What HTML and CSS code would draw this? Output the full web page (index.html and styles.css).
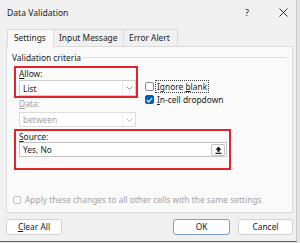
FILE: index.html
```html
<!DOCTYPE html>
<html>
<head>
<meta charset="utf-8">
<link rel="stylesheet" href="styles.css">
</head>
<body>
<div class="dialog">
  <div class="titlebar">
    <span class="title">Data Validation</span>
    <span class="help">?</span>
    <span class="close"><svg width="9" height="9" viewBox="0 0 9 9"><path d="M0.5 0.5 L8.5 8.5 M8.5 0.5 L0.5 8.5" stroke="#1b1b1b" stroke-width="0.9" fill="none"/></svg></span>
  </div>
  <div class="tabs">
    <div class="tab t1 active">Settings</div>
    <div class="tab t2">Input Message</div>
    <div class="tab t3">Error Alert</div>
  </div>
  <div class="panel">
    <div class="group-title"><span>Validation criteria</span><span class="rule"></span></div>
    <div class="criteria">
      <div class="row">
        <div class="leftcol">
          <div class="hl hl-allow">
            <div class="label"><u>A</u>llow:</div>
            <div class="combo"><span class="val">List</span><span class="arrow"><svg width="7" height="4" viewBox="0 0 7 4"><path d="M0.5 0.5 L3.5 3.5 L6.5 0.5" stroke="#8a8a8a" stroke-width="0.9" fill="none"/></svg></span></div>
          </div>
          <div class="label disabled"><u>D</u>ata:</div>
          <div class="combo combo-disabled"><span class="val">between</span><span class="arrow"><svg width="7" height="4" viewBox="0 0 7 4"><path d="M0.5 0.5 L3.5 3.5 L6.5 0.5" stroke="#b0b0b0" stroke-width="0.9" fill="none"/></svg></span></div>
        </div>
        <div class="checks">
          <div class="check"><span class="box"></span><span class="focus-text">Ignore <u>b</u>lank</span></div>
          <div class="check"><span class="box checked"><svg width="7" height="6" viewBox="0 0 7 6"><path d="M0.8 3 L2.7 4.9 L6.2 1" stroke="#fff" stroke-width="1.1" fill="none"/></svg></span><span class="ctext"><u>I</u>n-cell dropdown</span></div>
        </div>
      </div>
      <div class="hl hl-source">
        <div class="label label-src"><u>S</u>ource:</div>
        <div class="input"><span class="val">Yes, No</span><span class="pick"><svg width="7" height="8" viewBox="0 0 7 8"><path d="M3.5 0.5 L0.5 3.8 L2.4 3.8 L2.4 5.8 L4.6 5.8 L4.6 3.8 L6.5 3.8 Z" fill="#111"/><rect x="0.5" y="6.7" width="6" height="1.2" fill="#111"/></svg></span></div>
      </div>
    </div>
    <div class="apply"><span class="box box-disabled"></span><span class="apply-text">Apply these changes to all other cells with the same settings</span></div>
  </div>
  <div class="footer">
    <div class="btn btn-clear"><u>C</u>lear All</div>
    <div class="spacer"></div>
    <div class="btn btn-ok">OK</div>
    <div class="btn btn-cancel">Cancel</div>
  </div>
</div>
</body>
</html>
```

FILE: styles.css
```css
html, body {
  margin: 0;
  padding: 0;
}
body {
  background: #e4e4e4;
  font-family: "Noto Sans", sans-serif;
  font-size: 8.4px;
  color: #1b1b1b;
  width: 300px;
  height: 243px;
  overflow: hidden;
}
u {
  text-decoration-thickness: 1px;
  text-underline-offset: 1px;
}
.dialog {
  box-sizing: border-box;
  width: 297px;
  height: 242px;
  background: #f0f0f0;
  border-right: 1px solid #c8c8c8;
  border-bottom: 1px solid #5e5e5e;
}
.titlebar {
  height: 25px;
  display: flex;
  align-items: center;
  padding-left: 7px;
  padding-right: 6px;
}
.title {
  flex: 1;
  font-size: 8.6px;
}
.help {
  width: 14px;
  text-align: center;
  font-size: 9px;
}
.close {
  width: 14px;
  margin-left: 22px;
  display: flex;
  justify-content: center;
}
.tabs {
  display: flex;
  margin-top: 4px;
  padding-left: 7px;
  height: 17px;
}
.tab {
  box-sizing: border-box;
  height: 17px;
  line-height: 16px;
  border: 1px solid #dadada;
  border-bottom: none;
  margin-left: -1px;
  padding-left: 5px;
  white-space: nowrap;
}
.t1 { width: 47px; padding-left: 6px; margin-left: 0; }
.t2 { width: 71px; }
.t3 { width: 55px; }
.active {
  background: #fafafa;
  height: 18px;
  margin-bottom: -1px;
  position: relative;
  z-index: 1;
}
.panel {
  box-sizing: border-box;
  margin-left: 6px;
  width: 287px;
  height: 167px;
  background: #fafafa;
  border: 1px solid #dadada;
  padding: 4px 5px 0 5px;
}
.group-title {
  display: flex;
  align-items: center;
  height: 12px;
  gap: 2px;
  white-space: nowrap;
}
.rule {
  flex: 1;
  height: 1px;
  background: #dcdcdc;
}
.criteria {
  padding-left: 7px;
  margin-top: 3px;
}
.row {
  display: flex;
}
.leftcol {
  width: 117px;
}
.hl {
  border: 2px solid #e1242c;
  margin-left: -5px;
  padding-left: 3px;
}
.hl-allow {
  margin-right: -2px;
}
.label {
  height: 12px;
  line-height: 12px;
}
.label-src {
  height: 11px;
  line-height: 11px;
}
.disabled {
  color: #a3a3a3;
}
.combo {
  box-sizing: border-box;
  height: 16px;
  background: #fff;
  border: 1px solid #cdcdcd;
  display: flex;
  align-items: center;
  padding-left: 3px;
}
.combo .val {
  flex: 1;
}
.arrow {
  width: 12px;
  height: 100%;
  display: flex;
  align-items: center;
  justify-content: center;
  border-left: 1px solid #ececec;
}
.combo-disabled {
  height: 15px;
  margin-top: 2px;
  color: #a3a3a3;
  border-color: #dddddd;
}
.checks {
  margin-left: 9px;
  padding-top: 14px;
}
.check {
  display: flex;
  align-items: center;
  height: 13px;
  white-space: nowrap;
}
.box {
  box-sizing: border-box;
  width: 9px;
  height: 9px;
  border: 1px solid #8c8c8c;
  border-radius: 2px;
  background: #fff;
  display: flex;
  align-items: center;
  justify-content: center;
  flex: none;
}
.box.checked {
  background: #005fb8;
  border-color: #005fb8;
}
.focus-text {
  margin-left: 2px;
  padding: 0 1px;
  outline: 1px dotted #444;
  line-height: 11px;
}
.ctext {
  margin-left: 3px;
}
.hl-source {
  box-sizing: border-box;
  width: 217px;
  margin-top: 2px;
  padding-right: 2px;
  padding-bottom: 11px;
}
.input {
  box-sizing: border-box;
  height: 15px;
  background: #fff;
  border: 1px solid #c4c4c4;
  display: flex;
  align-items: center;
  padding-left: 3px;
  padding-right: 1px;
}
.input .val {
  flex: 1;
}
.pick {
  box-sizing: border-box;
  width: 14px;
  height: 12px;
  border: 1px solid #c2c2c2;
  border-radius: 2px;
  background: #fff;
  display: flex;
  align-items: center;
  justify-content: center;
}
.apply {
  display: flex;
  align-items: center;
  height: 13px;
  margin-top: 23px;
  padding-left: 1px;
  white-space: nowrap;
}
.box-disabled {
  width: 8px;
  height: 8px;
  border-color: #c2c2c2;
}
.apply-text {
  margin-left: 4px;
  color: #a3a3a3;
}
.footer {
  display: flex;
  padding: 6px 3px 0 6px;
}
.spacer {
  flex: 1;
}
.btn {
  box-sizing: border-box;
  height: 16px;
  line-height: 14px;
  text-align: center;
  background: #fdfdfd;
  border: 1px solid #d2d2d2;
  border-radius: 3px;
}
.btn-clear { width: 56px; }
.btn-ok { width: 57px; border-color: #7d9fcf; }
.btn-cancel { width: 55px; margin-left: 8px; }
```
